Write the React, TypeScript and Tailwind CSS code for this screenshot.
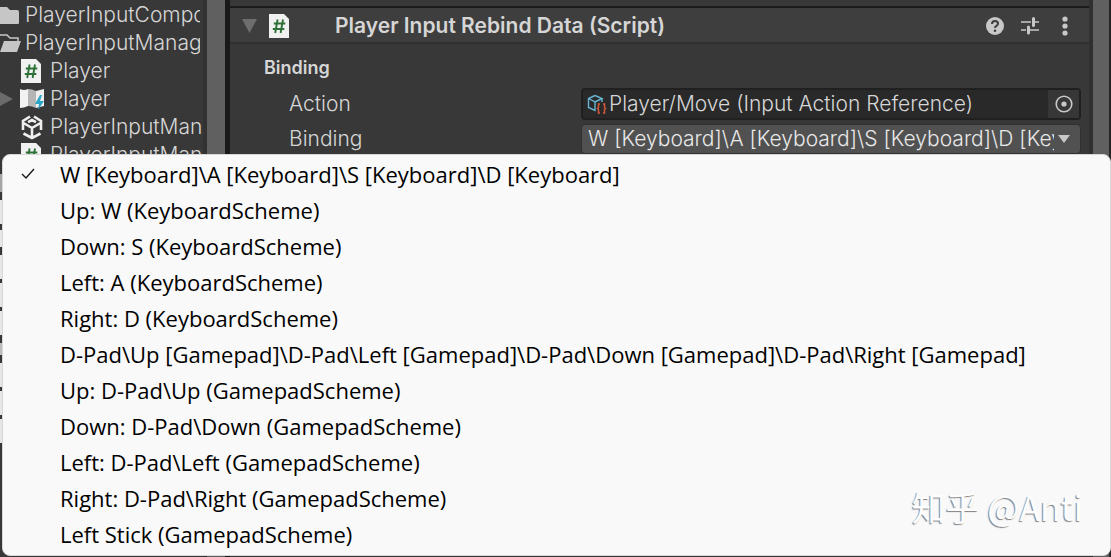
import { useState } from "react";

const MENU_ITEMS = [
  "W [Keyboard]\\A [Keyboard]\\S [Keyboard]\\D [Keyboard]",
  "Up: W (KeyboardScheme)",
  "Down: S (KeyboardScheme)",
  "Left: A (KeyboardScheme)",
  "Right: D (KeyboardScheme)",
  "D-Pad\\Up [Gamepad]\\D-Pad\\Left [Gamepad]\\D-Pad\\Down [Gamepad]\\D-Pad\\Right [Gamepad]",
  "Up: D-Pad\\Up (GamepadScheme)",
  "Down: D-Pad\\Down (GamepadScheme)",
  "Left: D-Pad\\Left (GamepadScheme)",
  "Right: D-Pad\\Right (GamepadScheme)",
  "Left Stick (GamepadScheme)",
];

function ScriptIcon() {
  return (
    <svg width="22" height="24" viewBox="0 0 22 24" fill="none" className="shrink-0">
      <path d="M1 0h15l5 5v19H1z" fill="#f1f1f1" />
      <path
        d="M9.600 5.500 7.200 19M15 5.500 12.600 19M5.800 9.500h11.500M4.800 15h11.500"
        stroke="#2d7038"
        strokeWidth="1.900"
      />
    </svg>
  );
}

function FolderIcon() {
  return (
    <svg width="20" height="18" viewBox="0 0 20 18" className="shrink-0">
      <path d="M0 1h7l3 3h7q2 0 2 2v11q0 1-1 1H0z" fill="#c6c6c6" />
    </svg>
  );
}

function OpenFolderIcon() {
  return (
    <svg width="21" height="18" viewBox="0 0 21 18" className="shrink-0">
      <path d="M0 1h7l3 3h8v3" fill="none" stroke="#c6c6c6" strokeWidth="1.5" />
      <path d="M4 7h17l-4 11H0z" fill="#c6c6c6" />
    </svg>
  );
}

function InputAssetIcon() {
  return (
    <svg width="26" height="22" viewBox="0 0 26 22" className="shrink-0">
      <path d="M0 1q4 2 8 0v17q-4 2-8 2z" fill="#f2f2f2" />
      <path d="M8 1q4 0 8 2v17q-4-2-8-2z" fill="#b5b5b5" />
      <path d="M16 3q4-1 8-2v17q-4 1-8 2z" fill="#eeeeee" />
      <path d="M20 7l-5 9h4l-1 6 6-9h-4l2-6z" fill="#2ba6c9" />
    </svg>
  );
}

function UnityIcon() {
  return (
    <svg width="24" height="26" viewBox="0 0 24 26" fill="none" className="shrink-0">
      <path
        d="M10 2.500 3 7v9M14 2.500 21 7v9M3.500 19.500 12 24l8.500-4.500M12 14v10M12 14 3.500 9M12 14l8.500-5M8 8.200 12 6l4 2.200"
        stroke="#efefef"
        strokeWidth="2.600"
      />
    </svg>
  );
}

function ActionIcon() {
  return (
    <svg width="20" height="20" viewBox="0 0 20 20" fill="none" className="shrink-0">
      <path d="M8 1.500 1.500 4.500v9L8 16.500V8L1.500 4.500M8 1.500l7 3L8 8M15 4.500V8" stroke="#67b5d3" strokeWidth="1.400" />
      <path
        d="M13 10h-1.500v3.500l-1 1 1 1V19H13M16 10h1.500v3.500l1 1-1 1V19H16"
        stroke="#d4593b"
        strokeWidth="1.500"
      />
    </svg>
  );
}

const TREE = [
  { label: "PlayerInputComponent", depth: 0, icon: <FolderIcon /> },
  { label: "PlayerInputManager", depth: 0, icon: <OpenFolderIcon /> },
  { label: "Player", depth: 1, icon: <ScriptIcon /> },
  { label: "Player", depth: 1, icon: <InputAssetIcon />, foldout: true },
  { label: "PlayerInputManager", depth: 1, icon: <UnityIcon /> },
  { label: "PlayerInputManager", depth: 1, icon: <ScriptIcon /> },
];

function ProjectTree() {
  return (
    <nav className="w-[207px] shrink-0 overflow-hidden border-r-4 border-[#323232] pt-px">
      <ul>
        {TREE.map((node, i) => (
          <li
            key={i}
            className={
              node.depth === 1
                ? "flex h-7 items-center overflow-hidden whitespace-nowrap"
                : "flex h-7 items-center overflow-hidden pr-[3px] whitespace-nowrap"
            }
          >
            {node.depth === 1 && (
              <span className="flex w-5 shrink-0">
                {node.foldout && (
                  <svg width="14" height="16" viewBox="0 0 14 16">
                    <path d="M0 1l13 7-13 7z" fill="#6b6b6b" />
                  </svg>
                )}
              </span>
            )}
            <span className={node.depth === 1 ? "flex w-[30px] shrink-0" : "flex w-[25px] shrink-0"}>
              {node.icon}
            </span>
            <span className="overflow-hidden">{node.label}</span>
          </li>
        ))}
      </ul>
      {/* light list that continues under the popup */}
      <div className="flex w-1 flex-col gap-1 pt-[5px]">
        <span className="h-[18px] bg-[#a5a5a5]" />
        <span className="mt-1 h-6 bg-[#e6e6e6]" />
        <span className="mt-0.5 h-[17px] bg-[#e6e6e6]" />
        <span className="mt-1 h-6 bg-[#e6e6e6]" />
        <span className="h-6 bg-[#e6e6e6]" />
        <span className="h-6 bg-[#e6e6e6]" />
        <span className="mt-1 h-3 bg-[#bdbdbd]" />
        <span className="mt-1 h-6 bg-[#e6e6e6]" />
        <span className="h-6 bg-[#e6e6e6]" />
        <span className="h-6 bg-[#e6e6e6]" />
      </div>
    </nav>
  );
}

function ComponentHeader() {
  return (
    <header className="flex h-[38px] items-center border-t-2 border-b-2 border-t-[#1b1b1b] border-b-[#303030] bg-[#3e3e3e] pt-px pr-3.5 pl-3">
      <button aria-label="Collapse" className="flex w-6 shrink-0">
        <svg width="16" height="16" viewBox="0 0 16 16">
          <path d="M0 1h15L7.500 15z" fill="#6e6e6e" />
        </svg>
      </button>
      <span className="ml-0.5 flex">
        <ScriptIcon />
      </span>
      <h2 className="ml-[45px] flex-1 font-semibold whitespace-nowrap">Player Input Rebind Data (Script)</h2>
      <div className="flex items-center gap-[15px]">
        <button aria-label="Help">
          <svg width="20" height="20" viewBox="0 0 20 20" fill="none">
            <circle cx="10" cy="10" r="9" fill="#c8c8c8" />
            <path d="M7 8q0-3 3-3t3 2.500q0 1.500-1.500 2.300T10 12" stroke="#3e3e3e" strokeWidth="2" />
            <circle cx="10" cy="14.700" r="1.300" fill="#3e3e3e" />
          </svg>
        </button>
        <button aria-label="Presets">
          <svg width="20" height="20" viewBox="0 0 20 20" fill="none" stroke="#c8c8c8">
            <path d="M1 6h10M15 6h4M1 14h5M9 14h10" strokeWidth="1.500" />
            <path d="M13.500 2.500v7M8.500 11v6" strokeWidth="3" strokeLinecap="round" />
          </svg>
        </button>
        <button aria-label="More options">
          <svg width="20" height="20" viewBox="0 0 20 20" fill="#c8c8c8">
            <circle cx="10" cy="3" r="2.600" />
            <circle cx="10" cy="10" r="2.600" />
            <circle cx="10" cy="17" r="2.600" />
          </svg>
        </button>
      </div>
    </header>
  );
}

export default function App() {
  const [selected, setSelected] = useState(0);

  return (
    <div className="relative flex min-h-screen overflow-hidden bg-[#383838] font-['Inter',sans-serif] text-[21px] leading-7 font-light text-[#d6d6d6]">
      <ProjectTree />
      <div className="w-[18px] shrink-0 bg-[#606060]" />
      <div className="w-[5px] shrink-0 bg-[#191919]" />

      <main className="min-w-0 flex-1 pt-1.5">
        <ComponentHeader />
        <div className="pr-2">
          <h3 className="mt-2.5 pl-[34px] text-[18px] font-semibold">Binding</h3>
          <div className="mt-1 flex h-[35px] items-center">
            <label htmlFor="action" className="w-[351px] shrink-0 pl-[59px]">
              Action
            </label>
            <div className="flex h-8 min-w-0 flex-1 items-center rounded border-2 border-[#202020] bg-[#292929] pl-1">
              <ActionIcon />
              <input
                id="action"
                readOnly
                value="Player/Move (Input Action Reference)"
                className="ml-0.5 min-w-0 flex-1 bg-transparent outline-none"
              />
              <button aria-label="Select action" className="flex h-7 w-[31px] items-center justify-center bg-[#373737]">
                <svg width="20" height="20" viewBox="0 0 20 20" fill="none">
                  <circle cx="10" cy="10" r="7.800" stroke="#c8c8c8" strokeWidth="1.600" />
                  <circle cx="10" cy="10" r="2.600" fill="#c8c8c8" />
                </svg>
              </button>
            </div>
          </div>
          <div className="flex h-[35px] items-center">
            <label htmlFor="binding" className="w-[351px] shrink-0 pl-[59px]">
              Binding
            </label>
            <div className="relative min-w-0 flex-1">
              <select
                id="binding"
                value={selected}
                onChange={(e) => setSelected(Number(e.target.value))}
                className="block h-[30px] w-full appearance-none rounded border border-[#303030] bg-[#515151] pr-[26px] pl-1.5 text-[#e8e8e8] outline-none"
              >
                {MENU_ITEMS.map((item, i) => (
                  <option key={item} value={i}>
                    {item}
                  </option>
                ))}
              </select>
              <svg
                width="14"
                height="8"
                viewBox="0 0 14 8"
                className="pointer-events-none absolute top-[11px] right-2.5"
              >
                <path d="M1 0h12L7 8z" fill="#c8c8c8" />
              </svg>
            </div>
          </div>
        </div>
      </main>

      <div className="w-[22px] shrink-0 border-r-2 border-l-4 border-r-[#252525] border-l-[#303030] bg-[#606060]" />

      {/* dropdown popup */}
      <div
        role="listbox"
        aria-label="Binding"
        className="absolute top-[154px] right-0 left-0.5 rounded-lg border border-[#d8d8d8] bg-[#f9f9f9] pt-px pb-[3px] font-['Open_Sans',sans-serif] text-[22px] font-normal text-black"
      >
        {MENU_ITEMS.map((item, i) => (
          <button
            key={item}
            role="option"
            aria-selected={selected === i}
            onClick={() => setSelected(i)}
            className="flex h-9 w-full items-center pl-[18px] text-left whitespace-nowrap"
          >
            <span className="flex w-[39px] shrink-0">
              {selected === i && (
                <svg width="14" height="12" viewBox="0 0 14 12" fill="none">
                  <path d="M1 6l4 4 8-9" stroke="#1a1a1a" strokeWidth="1.400" />
                </svg>
              )}
            </span>
            {item}
          </button>
        ))}
      </div>

      <p className="pointer-events-none absolute right-7 bottom-[30px] font-['Noto_Sans_CJK_SC',sans-serif] text-[34px] leading-10 font-normal text-[#fdfdfd] [text-shadow:-1px_1px_1px_#808080]">
        知乎 @Anti
      </p>
    </div>
  );
}
